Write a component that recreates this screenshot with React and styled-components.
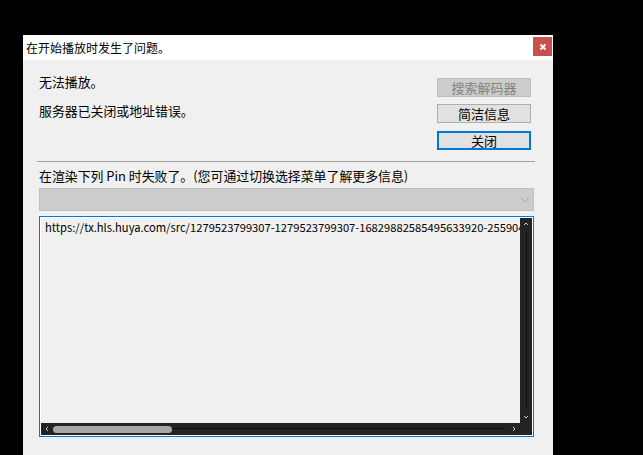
import React from 'react';
import styled, { createGlobalStyle } from 'styled-components';

const FONT = '"Noto Sans CJK SC", "Noto Sans", sans-serif';

const GlobalStyle = createGlobalStyle`
  html, body {
    margin: 0;
    padding: 0;
    background: #000;
    font-family: ${FONT};
    overflow: hidden;
  }
`;

// 대화상자 틀
const Dialog = styled.div`
  width: 530px;
  height: 420px;
  margin: 35px 0 0 23px;
  display: flex;
  flex-direction: column;
`;

const TitleBar = styled.div`
  height: 25px;
  background: #fff;
  display: flex;
  align-items: flex-start;
  justify-content: space-between;
`;

const Title = styled.span`
  font-size: 12px;
  line-height: 25px;
  padding-left: 3px;
  color: #000;
`;

const CloseButton = styled.div`
  width: 19px;
  height: 19px;
  margin: 2px 1px 0 0;
  background: #c75050;
  display: flex;
  align-items: center;
  justify-content: center;
`;

const Body = styled.div`
  flex: 1;
  background: #f0f0f0;
  padding: 14px 19px 0 16px;
  display: flex;
  flex-direction: column;
`;

const TopRow = styled.div`
  display: flex;
  justify-content: space-between;
  align-items: flex-start;
`;

const Messages = styled.div`
  display: flex;
  flex-direction: column;
  gap: 13px;
`;

const Message = styled.div`
  font-size: 12.9px;
  line-height: 16px;
  color: #000;
`;

const ButtonColumn = styled.div`
  display: flex;
  flex-direction: column;
  gap: 7px;
  padding-top: 4px;
  margin-right: 3px;
`;

const Button = styled.button`
  box-sizing: border-box;
  width: 94px;
  height: 19px;
  padding: 0;
  margin-top: ${(p) => (p.$primary ? '1px' : '0')};
  font-family: ${FONT};
  font-size: 13px;
  line-height: 15px;
  color: ${(p) => (p.disabled ? '#838383' : '#000')};
  background: ${(p) => (p.disabled ? '#cccccc' : '#e1e1e1')};
  border: ${(p) =>
    p.$primary ? '2px solid #0078d7' : p.disabled ? '1px solid #bfbfbf' : '1px solid #adadad'};
`;

const Divider = styled.div`
  height: 1px;
  background: #a0a0a0;
  margin: 11px -1px 0 -2px;
`;

const Label = styled.div`
  margin-top: 6px;
  font-size: 12.9px;
  line-height: 16px;
  color: #000;
  white-space: nowrap;
`;

const Combo = styled.div`
  box-sizing: border-box;
  height: 23px;
  margin-top: 4px;
  background: #cccccc;
  border: 1px solid #bfbfbf;
  display: flex;
  align-items: center;
  justify-content: flex-end;
  padding-right: 3px;
`;

const TextBox = styled.div`
  box-sizing: border-box;
  height: 221px;
  margin-top: 5px;
  border: 1px solid #0078d7;
  box-shadow: inset 0 0 0 1px #fff;
  padding: 1px;
  display: grid;
  grid-template-columns: 1fr 12px;
  grid-template-rows: 1fr 12px;
`;

const TextArea = styled.div`
  overflow: hidden;
  white-space: nowrap;
  padding: 1px 0 0 4px;
  font-size: 11.2px;
  line-height: 16px;
  color: #000;
  background: #f0f0f0;
`;

const VScroll = styled.div`
  background: #232323;
  display: flex;
  flex-direction: column;
  align-items: center;
`;

const HScroll = styled.div`
  background: #232323;
  display: flex;
  align-items: center;
`;

const Corner = styled.div`
  background: #232323;
`;

const ArrowBox = styled.div`
  width: 12px;
  height: 12px;
  flex: none;
  display: flex;
  align-items: center;
  justify-content: center;
`;

const VTrack = styled.div`
  flex: 1;
  width: 1px;
  background: #0f0f0f;
  margin: 2px 0;
`;

const HTrack = styled.div`
  flex: 1;
  display: flex;
  align-items: center;
  position: relative;
  height: 12px;
  margin-right: 4px;

  &::before {
    content: '';
    position: absolute;
    left: 0;
    right: 0;
    top: 5px;
    height: 1px;
    background: #0f0f0f;
  }
`;

const Thumb = styled.div`
  position: relative;
  width: 119px;
  height: 7px;
  border-radius: 4px;
  background: #a6a6a6;
`;

const Chevron = ({ dir, color = '#d0d0d0', size = 6 }) => {
  const paths = {
    up: 'M1 4 L3 2 L5 4',
    down: 'M1 2 L3 4 L5 2',
    left: 'M4 1 L2 3 L4 5',
    right: 'M2 1 L4 3 L2 5',
  };
  return (
    <svg width={size} height={size} viewBox="0 0 6 6">
      <path d={paths[dir]} fill="none" stroke={color} strokeWidth="1" />
    </svg>
  );
};

const url =
  'https://tx.hls.huya.com/src/1279523799307-1279523799307-16829882585495633920-2559047598614-10057-A-0-1.m3u8';

export default function App() {
  return (
    <>
      <GlobalStyle />
      <Dialog>
        <TitleBar>
          <Title>在开始播放时发生了问题。</Title>
          <CloseButton>
            <svg width="8" height="8" viewBox="0 0 8 8">
              <path d="M1.5 1.5 L6.5 6.5 M6.5 1.5 L1.5 6.5" stroke="#fff" strokeWidth="1.8" />
            </svg>
          </CloseButton>
        </TitleBar>
        <Body>
          <TopRow>
            <Messages>
              <Message>无法播放。</Message>
              <Message>服务器已关闭或地址错误。</Message>
            </Messages>
            <ButtonColumn>
              <Button disabled>搜索解码器</Button>
              <Button>简洁信息</Button>
              <Button $primary>关闭</Button>
            </ButtonColumn>
          </TopRow>
          <Divider />
          <Label>在渲染下列 Pin 时失败了。(您可通过切换选择菜单了解更多信息)</Label>
          <Combo>
            <svg width="10" height="6" viewBox="0 0 10 6">
              <path d="M0.5 0.5 L5 5 L9.5 0.5" fill="none" stroke="#a8a8a8" strokeWidth="1" />
            </svg>
          </Combo>
          <TextBox>
            <TextArea>{url}</TextArea>
            <VScroll>
              <ArrowBox>
                <Chevron dir="up" />
              </ArrowBox>
              <VTrack />
              <ArrowBox>
                <Chevron dir="down" />
              </ArrowBox>
            </VScroll>
            <HScroll>
              <ArrowBox>
                <Chevron dir="left" />
              </ArrowBox>
              <HTrack>
                <Thumb />
              </HTrack>
              <ArrowBox>
                <Chevron dir="right" />
              </ArrowBox>
            </HScroll>
            <Corner />
          </TextBox>
        </Body>
      </Dialog>
    </>
  );
}
